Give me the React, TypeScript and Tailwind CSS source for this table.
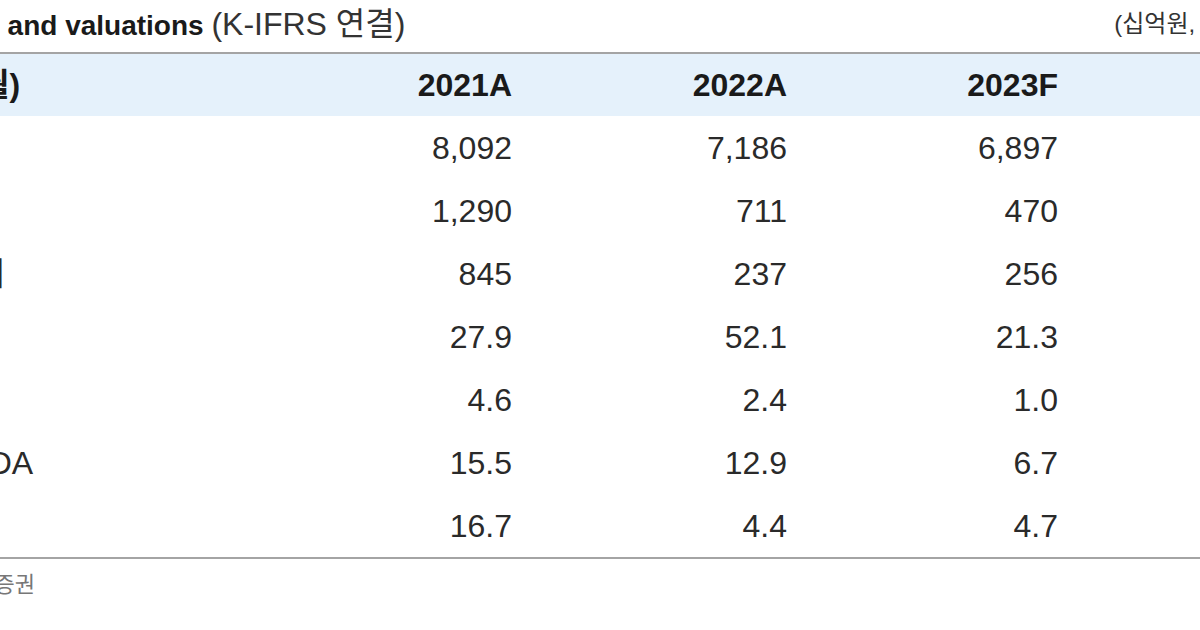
const FONT = "font-['Liberation_Sans','Noto_Sans_CJK_KR',sans-serif]";

const rows = [
  { label: "매출액", values: ["8,092", "7,186", "6,897", "7,412"] },
  { label: "영업이익", values: ["1,290", "711", "470", "612"] },
  { label: "순익 지배", values: ["845", "237", "256", "418"], shift: true },
  { label: "PER", values: ["27.9", "52.1", "21.3", "13.0"] },
  { label: "PBR", values: ["4.6", "2.4", "1.0", "0.9"] },
  { label: "EV/EBITDA", values: ["15.5", "12.9", "6.7", "5.4"] },
  { label: "ROE", values: ["16.7", "4.4", "4.7", "7.2"] },
];

const years = ["2021A", "2022A", "2023F", "2024F"];

export default function App() {
  return (
    <div className={`w-[1200px] h-[630px] overflow-hidden bg-white text-[#222] ${FONT}`}>
      <div className="w-[1450px] -ml-[134px]">
        {/* title */}
        <div className="h-[52px] flex items-center justify-between pb-1">
          <p className="whitespace-nowrap pl-[14px]">
            <span className="text-[28px] font-bold text-[#1a1a1a]">Earnings and valuations </span>
            <span className="text-[32px] text-[#333]">(K-IFRS 연결)</span>
          </p>
          <p className="whitespace-nowrap text-[24px] text-[#333] pr-[14px]">(십억원, 원, %, 배)</p>
        </div>

        <div className="border-t-2 border-[#a4a4a4]">
          {/* header */}
          <div className="grid grid-cols-[366px_280px_275px_271px_258px] h-[62px] items-center bg-[#e5f1fb] text-[32px] font-bold text-[#1a1a1a]">
            <div className="whitespace-nowrap">결산 (12월)</div>
            {years.map((y) => (
              <div key={y} className="text-right">{y}</div>
            ))}
          </div>

          {rows.map((r) => (
            <div
              key={r.label}
              className="grid grid-cols-[366px_280px_275px_271px_258px] h-[63px] items-center text-[32px] text-[#2a2a2a]"
            >
              <div className={r.shift ? "whitespace-nowrap pl-[12px]" : "whitespace-nowrap"}>{r.label}</div>
              {r.values.map((v, i) => (
                <div key={i} className="text-right">{v}</div>
              ))}
            </div>
          ))}
        </div>

        {/* footer */}
        <div className="border-t-2 border-[#a4a4a4] pt-[9px] pl-[15px]">
          <p className="text-[22px] text-[#777] whitespace-nowrap">자료: 유안타증권</p>
        </div>
      </div>
    </div>
  );
}
